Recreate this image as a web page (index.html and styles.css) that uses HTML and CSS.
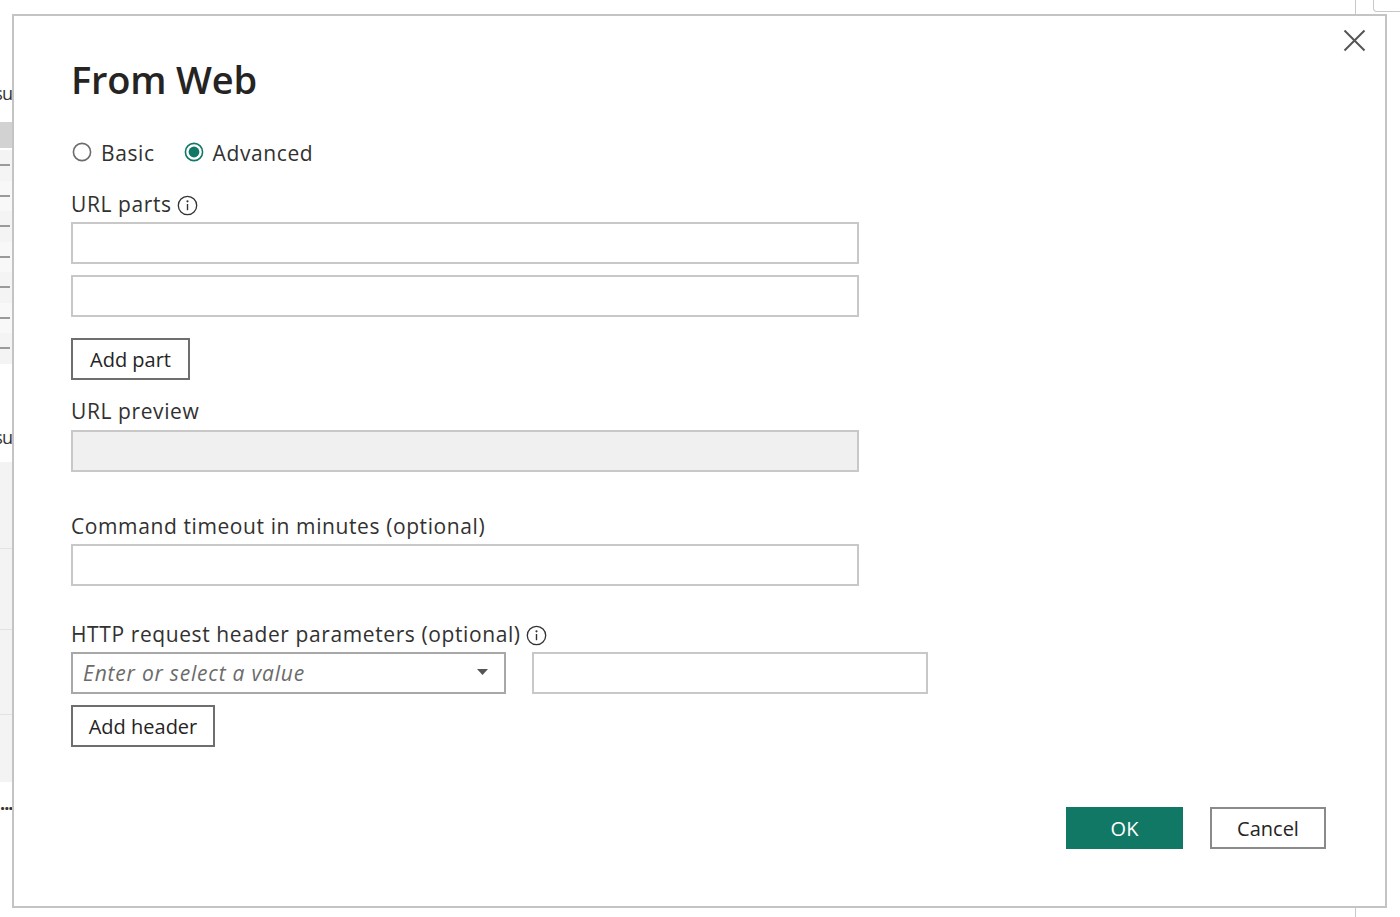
FILE: index.html
```html
<!DOCTYPE html>
<html lang="en">
<head>
<meta charset="utf-8">
<title>From Web</title>
<link rel="stylesheet" href="styles.css">
</head>
<body>
<div class="app">
  <div class="app-left">
    <div class="peek-text peek-text-top">Resu</div>
    <div class="peek-band"></div>
    <div class="peek-rows">
      <div class="peek-row"><span class="peek-dash"></span></div>
      <div class="peek-row alt"><span class="peek-dash"></span></div>
      <div class="peek-row"><span class="peek-dash"></span></div>
      <div class="peek-row alt"><span class="peek-dash"></span></div>
      <div class="peek-row"><span class="peek-dash"></span></div>
      <div class="peek-row alt"><span class="peek-dash"></span></div>
      <div class="peek-row"><span class="peek-dash"></span></div>
    </div>
    <div class="peek-text peek-text-mid">Resu</div>
    <div class="peek-panel">
      <div class="peek-cell peek-cell-1"></div>
      <div class="peek-cell peek-cell-2"></div>
      <div class="peek-cell peek-cell-3"></div>
      <div class="peek-cell peek-cell-4"></div>
    </div>
    <div class="peek-more">...</div>
  </div>
  <div class="app-main"></div>
  <div class="app-side"><div class="app-tab"></div></div>
</div>

<div class="dialog" role="dialog" aria-labelledby="dlg-title">
  <button class="close" type="button" aria-label="Close">
    <svg width="23" height="23" viewBox="0 0 23 23"><path d="M1.5 1.5 L21.5 21.5 M21.5 1.5 L1.5 21.5" stroke="#555" stroke-width="2" fill="none"/></svg>
  </button>

  <h1 class="title" id="dlg-title">From Web</h1>

  <div class="radios">
    <label class="radio">
      <svg class="radio-icon" width="20" height="20" viewBox="0 0 20 20"><circle cx="10" cy="10" r="8.6" fill="#fff" stroke="#6b6b6b" stroke-width="1.6"/></svg>
      <span>Basic</span>
    </label>
    <label class="radio">
      <svg class="radio-icon" width="20" height="20" viewBox="0 0 20 20"><circle cx="10" cy="10" r="8.6" fill="#fff" stroke="#117865" stroke-width="1.6"/><circle cx="10" cy="10" r="5.4" fill="#117865"/></svg>
      <span>Advanced</span>
    </label>
  </div>

  <div class="label label-first">URL parts
    <svg class="info" width="21" height="21" viewBox="0 0 21 21"><circle cx="10.5" cy="10.5" r="9.2" fill="none" stroke="#333" stroke-width="1.3"/><circle cx="10.5" cy="6.3" r="1.1" fill="#333"/><path d="M10.5 9 V15.2" stroke="#333" stroke-width="1.4"/></svg>
  </div>
  <div class="input input-wide gap-4"></div>
  <div class="input input-wide gap-11"></div>
  <button class="btn btn-part gap-21" type="button">Add part</button>

  <div class="label gap-17">URL preview</div>
  <div class="input input-wide input-disabled gap-5"></div>

  <div class="label gap-40">Command timeout in minutes (optional)</div>
  <div class="input input-wide gap-4"></div>

  <div class="label gap-34">HTTP request header parameters (optional)
    <svg class="info" width="21" height="21" viewBox="0 0 21 21"><circle cx="10.5" cy="10.5" r="9.2" fill="none" stroke="#333" stroke-width="1.3"/><circle cx="10.5" cy="6.3" r="1.1" fill="#333"/><path d="M10.5 9 V15.2" stroke="#333" stroke-width="1.4"/></svg>
  </div>
  <div class="header-row gap-4">
    <div class="combo">
      <span class="placeholder">Enter or select a value</span>
      <svg class="caret" width="11" height="6" viewBox="0 0 11 6"><path d="M0 0 H11 L5.5 6 Z" fill="#555"/></svg>
    </div>
    <div class="input input-value"></div>
  </div>
  <button class="btn btn-header gap-11" type="button">Add header</button>

  <div class="footer">
    <button class="btn btn-primary" type="button">OK</button>
    <button class="btn btn-cancel" type="button">Cancel</button>
  </div>
</div>
</body>
</html>
```

FILE: styles.css
```css
* { box-sizing: border-box; }

html, body {
  margin: 0;
  padding: 0;
  width: 1400px;
  height: 917px;
  overflow: hidden;
  background: #ffffff;
  font-family: "Open Sans", "Noto Sans", "Liberation Sans", sans-serif;
  color: #323130;
}

/* ---------- background application (peeking out) ---------- */
.app {
  display: flex;
  width: 1400px;
  height: 917px;
}

.app-left {
  width: 12px;
  flex: none;
  overflow: hidden;
  display: flex;
  flex-direction: column;
}

.peek-text {
  height: 22px;
  line-height: 22px;
  font-size: 18px;
  color: #333;
  white-space: nowrap;
  display: flex;
  justify-content: flex-end;
  letter-spacing: -1px;
}

.peek-text-top { margin-top: 82px; }

.peek-band {
  margin-top: 18px;
  height: 26px;
  background: #d2d2d2;
  flex: none;
}

.peek-rows {
  margin-top: 2px;
  display: flex;
  flex-direction: column;
}

.peek-row {
  height: 30.5px;
  background: #f4f4f4;
  display: flex;
  align-items: center;
}

.peek-row.alt { background: #f8f8f8; }

.peek-dash {
  width: 10px;
  height: 2px;
  background: #9a9a9a;
}

.peek-text-mid { margin-top: 62px; }

.peek-panel {
  margin-top: 14px;
  height: 320px;
  background: #f3f3f3;
  display: flex;
  flex-direction: column;
}

.peek-cell { border-bottom: 1px solid #e2e2e2; flex: none; }
.peek-cell-1 { height: 87px; }
.peek-cell-2 { height: 81px; }
.peek-cell-3 { height: 85px; }
.peek-cell-4 { height: 67px; border-bottom: none; }

.peek-more {
  margin-top: 10px;
  font-size: 18px;
  font-weight: 700;
  line-height: 22px;
  color: #333;
  letter-spacing: -1px;
  white-space: nowrap;
}

.app-main { flex: 1; }

.app-side {
  width: 45px;
  flex: none;
  border-left: 1px solid #c8c8c8;
}

.app-tab {
  margin-left: 17px;
  height: 12px;
  border-left: 1px solid #c8c8c8;
  border-bottom: 1px solid #c8c8c8;
  border-bottom-left-radius: 4px;
}

/* ---------- dialog (modal overlay) ---------- */
.dialog {
  position: absolute;
  left: 12px;
  top: 14px;
  width: 1375px;
  height: 894px;
  background: #ffffff;
  border: 2px solid #c4c4c4;
  padding: 40px 59px 57px 57px;
  display: flex;
  flex-direction: column;
  align-items: flex-start;
}

.close {
  position: absolute;
  top: 13px;
  right: 19px;
  width: 23px;
  height: 23px;
  padding: 0;
  border: none;
  background: transparent;
  display: flex;
}

.title {
  margin: 0;
  font-size: 38px;
  line-height: 46px;
  font-weight: 600;
  color: #252423;
  letter-spacing: -0.2px;
}

.radios {
  margin-top: 37px;
  height: 28px;
  display: flex;
  align-items: center;
  gap: 28px;
}

.radio {
  display: flex;
  align-items: center;
  gap: 9px;
  font-size: 21px;
  letter-spacing: 0.6px;
  line-height: 28px;
  color: #323130;
}

.radio-icon { position: relative; top: -1px; margin-left: 1px; }

.label {
  font-size: 21px;
  letter-spacing: 0.6px;
  line-height: 28px;
  color: #323130;
  display: flex;
  align-items: center;
  white-space: nowrap;
}

.label-first { margin-top: 23px; }

.info { margin-left: 5px; position: relative; top: 1px; }

.gap-4 { margin-top: 4px; }
.gap-5 { margin-top: 5px; }
.gap-11 { margin-top: 11px; }
.gap-17 { margin-top: 17px; }
.gap-21 { margin-top: 21px; }
.gap-34 { margin-top: 34px; }
.gap-40 { margin-top: 40px; }

.input {
  height: 42px;
  border: 2px solid #c8c8c8;
  background: #ffffff;
}

.input-wide { width: 788px; }

.input-disabled { background: #f0f0f0; }

.header-row {
  display: flex;
  gap: 26px;
}

.combo {
  width: 435px;
  height: 42px;
  border: 2px solid #a8a8a8;
  display: flex;
  align-items: center;
  justify-content: space-between;
  padding: 0 16px 0 10px;
}

.placeholder {
  font-size: 21px;
  letter-spacing: 0.8px;
  font-style: italic;
  color: #6b6b6b;
  white-space: nowrap;
}

.caret { margin-top: -3px; }

.input-value { width: 396px; }

.btn {
  height: 42px;
  padding: 0;
  border: 2px solid #6e6e6e;
  background: #ffffff;
  font-family: inherit;
  font-size: 20px;
  color: #252423;
  display: flex;
  align-items: center;
  justify-content: center;
}

.btn-part { width: 119px; }
.btn-header { width: 144px; }

.footer {
  margin-top: auto;
  align-self: stretch;
  display: flex;
  justify-content: flex-end;
  gap: 27px;
}

.btn-primary {
  width: 117px;
  background: #117865;
  border-color: #117865;
  color: #ffffff;
}

.btn-cancel {
  width: 116px;
  border-color: #8a8a8a;
}
```
